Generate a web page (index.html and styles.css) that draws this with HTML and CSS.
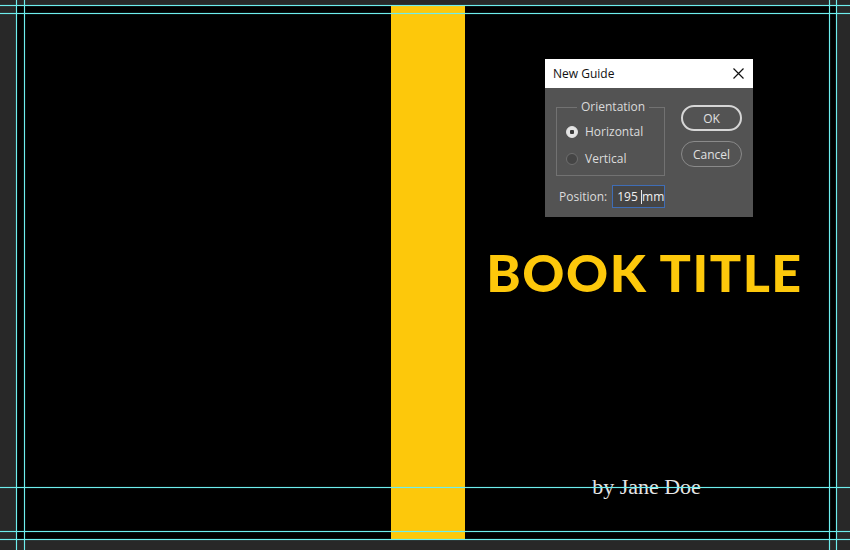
FILE: index.html
```html
<!DOCTYPE html>
<html lang="en">
<head>
  <meta charset="UTF-8">
  <title>Book Cover - New Guide</title>
  <link rel="stylesheet" href="styles.css">
</head>
<body>
  <div class="workspace">
    <div class="document">
      <div class="back"></div>
      <div class="spine"></div>
      <div class="front">
        <h1 class="book-title">BOOK TITLE</h1>
        <p class="author">by Jane Doe</p>
      </div>
    </div>
  </div>

  <!-- guides sit over the canvas -->
  <div class="guide v" style="left:16px"></div>
  <div class="guide v" style="left:24px"></div>
  <div class="guide v" style="left:829px"></div>
  <div class="guide v" style="left:836px"></div>
  <div class="guide h" style="top:5px"></div>
  <div class="guide h" style="top:13px"></div>
  <div class="guide h" style="top:487px"></div>
  <div class="guide h" style="top:531px"></div>
  <div class="guide h" style="top:539px"></div>

  <div class="dialog">
    <div class="dialog-title">
      <span>New Guide</span>
      <svg class="close" width="11" height="11" viewBox="0 0 11 11">
        <path d="M0.5 0.5 L10.5 10.5 M10.5 0.5 L0.5 10.5" stroke="#111" stroke-width="1.2" fill="none"/>
      </svg>
    </div>
    <div class="dialog-body">
      <div class="dialog-top">
        <fieldset class="orientation">
          <legend>Orientation</legend>
          <label class="radio"><span class="dot checked"></span>Horizontal</label>
          <label class="radio"><span class="dot"></span>Vertical</label>
        </fieldset>
        <div class="buttons">
          <button class="btn default">OK</button>
          <button class="btn">Cancel</button>
        </div>
      </div>
      <div class="position">
        <span>Position:</span>
        <div class="field">195<span class="caret"></span>mm</div>
      </div>
    </div>
  </div>
</body>
</html>
```

FILE: styles.css
```css
body {
  margin: 0;
  width: 850px;
  height: 550px;
  overflow: hidden;
  background: #282828;
  position: relative;
}
.workspace {
  padding: 5px 0 0 16px;
}
.document {
  display: flex;
  width: 820px;
  height: 534px;
  background: #000;
}
.back {
  width: 375px;
}
.spine {
  width: 74px;
  background: #fdc80b;
}
.front {
  flex: 1;
  display: flex;
  flex-direction: column;
  align-items: center;
  padding-right: 12px;
}
.book-title {
  margin: 241px 0 0;
  font-family: Lato, sans-serif;
  font-weight: 900;
  font-size: 52px;
  line-height: 52px;
  letter-spacing: 1.5px;
  color: #fdc80b;
}
.author {
  margin: 176px 0 0 4px;
  font-family: "Liberation Serif", serif;
  font-size: 22px;
  line-height: 26px;
  color: #e6e6e6;
}

.guide {
  position: absolute;
  background: #6eeeee;
  box-shadow: 0 0 1px rgba(110, 238, 238, 0.8);
}
.guide.v {
  top: 0;
  width: 1px;
  height: 550px;
}
.guide.h {
  left: 0;
  width: 850px;
  height: 1px;
}

.dialog {
  position: absolute;
  left: 545px;
  top: 59px;
  width: 208px;
  height: 158px;
  background: #535353;
  font-family: "Open Sans", sans-serif;
  font-size: 12px;
  color: #dcdcdc;
}
.dialog-title {
  height: 29px;
  background: #fff;
  color: #111;
  display: flex;
  align-items: center;
  justify-content: space-between;
  padding: 0 9px 0 8px;
}
.dialog-body {
  padding: 12px 11px 0 11px;
}
.dialog-top {
  display: flex;
  justify-content: space-between;
}
.orientation {
  margin: 0;
  width: 109px;
  height: 76px;
  box-sizing: border-box;
  border: 1px solid #727272;
  padding: 4px 0 0 9px;
}
.orientation legend {
  margin-left: 11px;
  padding: 0 4px;
  line-height: 14px;
  color: #dadada;
}
.radio {
  display: flex;
  align-items: center;
  gap: 7px;
  height: 27px;
}
.dot {
  width: 12px;
  height: 12px;
  box-sizing: border-box;
  border-radius: 50%;
  border: 1px solid #6e6e6e;
  background: #454545;
}
.dot.checked {
  background: radial-gradient(circle, #3a3a3a 0 2px, #e4e4e4 2.5px);
  border-color: #e4e4e4;
}
.buttons {
  display: flex;
  flex-direction: column;
  gap: 10px;
  padding-top: 5px;
}
.btn {
  width: 61px;
  height: 26px;
  border-radius: 13px;
  border: 1px solid #8a8a8a;
  background: #535353;
  color: #e0e0e0;
  font-family: "Open Sans", sans-serif;
  font-size: 12px;
  padding: 0;
}
.btn.default {
  border: 2px solid #d6d6d6;
}
.position {
  display: flex;
  align-items: center;
  gap: 5px;
  margin-top: 9px;
  padding-left: 3px;
}
.field {
  width: 53px;
  height: 23px;
  box-sizing: border-box;
  border: 1px solid #3f6db5;
  background: #454545;
  color: #f0f0f0;
  display: flex;
  align-items: center;
  padding-left: 4px;
}
.caret {
  width: 1px;
  height: 14px;
  background: #e8e8e8;
  margin: 0 1px 0 3px;
}
```
